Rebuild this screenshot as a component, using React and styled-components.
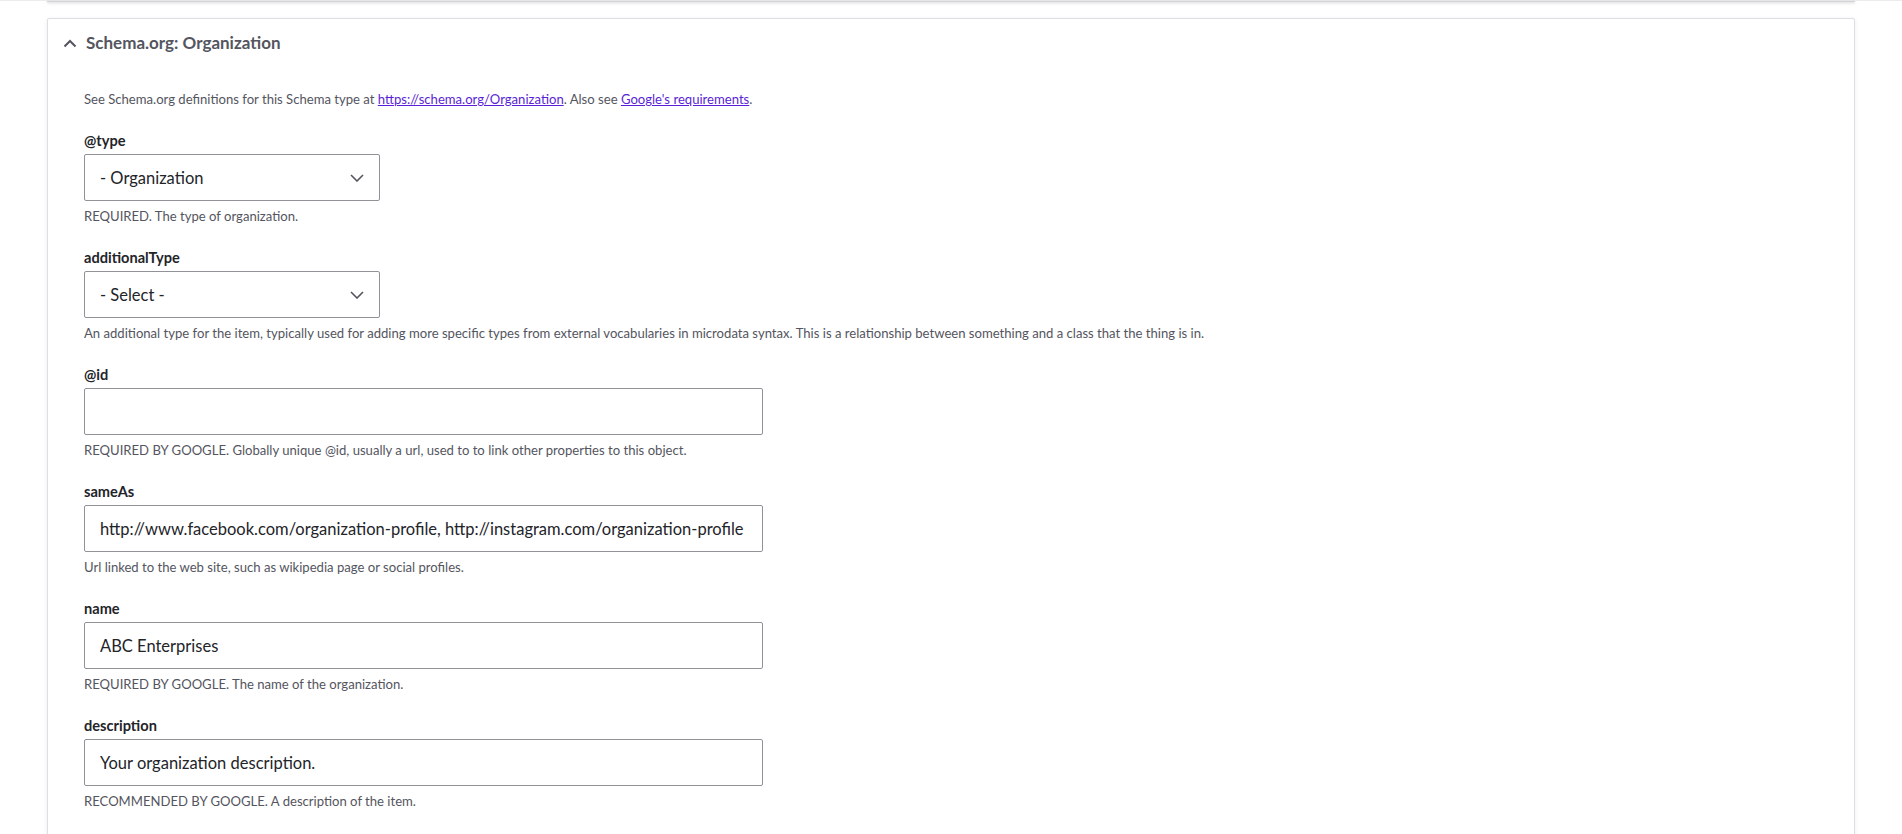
import React from 'react';
import styled, { createGlobalStyle } from 'styled-components';

const GlobalStyle = createGlobalStyle`
  html, body {
    margin: 0;
    padding: 0;
    background: #fff;
  }
  body {
    font-family: Lato, "Open Sans", "Noto Sans", sans-serif;
    color: #232429;
  }
  * {
    box-sizing: border-box;
  }
`;

const Page = styled.div`
  padding: 0 47px;
  min-height: 834px;
  border-top: 1px solid #ececec;
`;

const PrevCardEdge = styled.div`
  height: 1px;
  background: #d4d4d8;
  box-shadow: 0 1px 3px rgba(0, 0, 0, 0.28);
`;

const Card = styled.div`
  margin-top: 16px;
  border: 1px solid #dedfe4;
  border-radius: 2px;
  box-shadow: 0 1px 4px rgba(0, 0, 0, 0.08);
  background: #fff;
`;

const Summary = styled.div`
  display: flex;
  align-items: center;
  gap: 9px;
  padding: 14px 15px 13px;
  font-size: 17px;
  line-height: 20px;
  font-weight: 700;
  color: #545560;
`;

const Body = styled.div`
  padding: 25px 36px 40px;
`;

const Intro = styled.p`
  margin: 0 0 24px;
  font-size: 13.1px;
  line-height: 17px;
  color: #545560;

  a {
    color: #5a1fd6;
  }
`;

const Field = styled.div`
  margin-bottom: 24px;
`;

const Label = styled.label`
  display: block;
  margin-bottom: 4px;
  font-size: 14.6px;
  line-height: 18px;
  font-weight: 700;
  color: #232429;
`;

const SelectWrap = styled.div`
  position: relative;
  width: 296px;
`;

const Select = styled.select`
  appearance: none;
  width: 100%;
  height: 47px;
  padding: 0 44px 0 15px;
  border: 1px solid #919297;
  border-radius: 2px;
  background: #fff;
  font-family: inherit;
  font-size: 16.5px;
  color: #232429;
`;

const Arrow = styled.svg`
  position: absolute;
  right: 16px;
  top: 20px;
  pointer-events: none;
`;

const TextInput = styled.input`
  display: block;
  width: 679px;
  height: 47px;
  padding: 0 15px;
  border: 1px solid #919297;
  border-radius: 2px;
  background: #fff;
  font-family: inherit;
  font-size: 16.5px;
  color: #232429;
`;

const Help = styled.div`
  margin-top: 7px;
  font-size: 13.1px;
  line-height: 17px;
  color: #545560;
`;

const fields = [
  {
    label: '@type',
    kind: 'select',
    value: '- Organization',
    help: 'REQUIRED. The type of organization.',
  },
  {
    label: 'additionalType',
    kind: 'select',
    value: '- Select -',
    help: 'An additional type for the item, typically used for adding more specific types from external vocabularies in microdata syntax. This is a relationship between something and a class that the thing is in.',
  },
  {
    label: '@id',
    kind: 'text',
    value: '',
    help: 'REQUIRED BY GOOGLE. Globally unique @id, usually a url, used to to link other properties to this object.',
  },
  {
    label: 'sameAs',
    kind: 'text',
    value: 'http://www.facebook.com/organization-profile, http://instagram.com/organization-profile',
    help: 'Url linked to the web site, such as wikipedia page or social profiles.',
  },
  {
    label: 'name',
    kind: 'text',
    value: 'ABC Enterprises',
    help: 'REQUIRED BY GOOGLE. The name of the organization.',
  },
  {
    label: 'description',
    kind: 'text',
    value: 'Your organization description.',
    help: 'RECOMMENDED BY GOOGLE. A description of the item.',
  },
];

const ChevronUp = () => (
  <svg width="14" height="9" viewBox="0 0 14 9" fill="none">
    <path d="M1.5 7.5L7 2l5.5 5.5" stroke="#545560" strokeWidth="2" />
  </svg>
);

const App = () => {
  return (
    <Page>
      <GlobalStyle />
      <PrevCardEdge />
      <Card>
        <Summary>
          <ChevronUp />
          <span>Schema.org: Organization</span>
        </Summary>
        <Body>
          <Intro>
            See Schema.org definitions for this Schema type at{' '}
            <a href="#org">https://schema.org/Organization</a>. Also see{' '}
            <a href="#google">Google's requirements</a>.
          </Intro>
          {fields.map((f) => (
            <Field key={f.label}>
              <Label>{f.label}</Label>
              {f.kind === 'select' ? (
                <SelectWrap>
                  <Select defaultValue={f.value}>
                    <option>{f.value}</option>
                  </Select>
                  <Arrow width="14" height="8" viewBox="0 0 14 8" fill="none">
                    <path d="M1 1l6 6 6-6" stroke="#545560" strokeWidth="1.6" />
                  </Arrow>
                </SelectWrap>
              ) : (
                <TextInput type="text" defaultValue={f.value} />
              )}
              <Help>{f.help}</Help>
            </Field>
          ))}
        </Body>
      </Card>
    </Page>
  );
};

export default App;
